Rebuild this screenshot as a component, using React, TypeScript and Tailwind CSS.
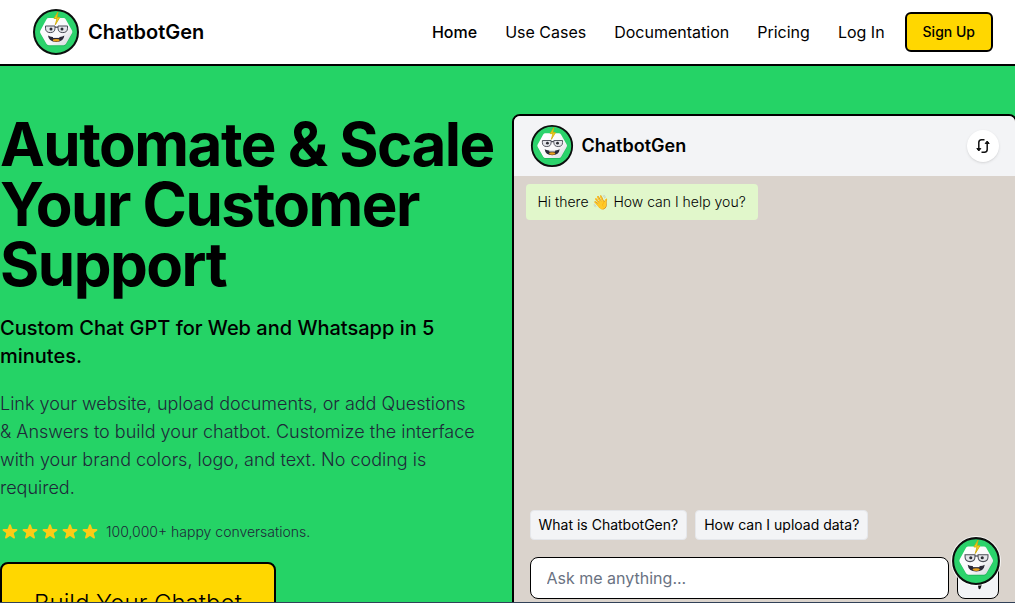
import { useState } from "react";

const navLinks = [
  { label: "Home", href: "#home", active: true },
  { label: "Use Cases", href: "#use-cases" },
  { label: "Documentation", href: "#docs" },
  { label: "Pricing", href: "#pricing" },
  { label: "Log In", href: "#login" },
];

const suggestions = ["What is ChatbotGen?", "How can I upload data?"];

function BotLogo({ className }: { className: string }) {
  return (
    <svg viewBox="0 0 48 48" className={className} aria-hidden="true">
      <defs>
        <linearGradient id="face" x1="0" y1="0" x2="1" y2="1">
          <stop offset="0" stopColor="#ffffff" />
          <stop offset="0.6" stopColor="#f8f8fa" />
          <stop offset="1" stopColor="#d0d2d9" />
        </linearGradient>
      </defs>
      <circle cx="24" cy="24" r="22" fill="#2bd36b" stroke="#0b0f0d" strokeWidth="2" />
      <path d="M17 11h14.500q1.500 0 2.300 1.400l6.200 11q.8 1.400 0 2.800l-6 10.600q-.8 1.400-2.300 1.400H17q-1.500 0-2.300-1.400l-6-10.600q-.8-1.400 0-2.800l6-11Q15.500 11 17 11z" fill="#1a9e4b" opacity="0.5" />
      <path d="M16.700 10h14.800q1.500 0 2.300 1.400l6.200 11q.8 1.400 0 2.800l-6 10.600q-.8 1.400-2.300 1.400H16.700q-1.500 0-2.300-1.400l-6-10.600q-.8-1.400 0-2.800l6-11Q15.200 10 16.700 10z" fill="url(#face)" />
      <path d="M26 4 22 10.500h3L23.300 16.800 27.800 9.400h-3z" fill="#f9d71c" stroke="#d0ab10" strokeWidth="0.900" />
      <path d="M13.500 18h9.500v2.200q0 4.400-4.700 4.400t-4.800-4.400zM26 18h9.500v2.200q0 4.400-4.700 4.400T26 20.200z" fill="#e4e5ea" stroke="#4a4c56" strokeWidth="1" />
      <path d="M23 19.200h3" stroke="#4a4c56" strokeWidth="1.200" />
      <circle cx="19" cy="20.900" r="1.500" fill="#2b2c34" />
      <circle cx="30" cy="20.900" r="1.500" fill="#2b2c34" />
      <path d="M16 27.500q2 1.200 4.500 1.400h7.400q2.500-.2 4.500-1.400-.8 6.500-8.200 6.500T16 27.500z" fill="#2a2836" />
      <path d="M21 28.600h6.400v1.300H21z" fill="#fff" />
      <ellipse cx="24.200" cy="32.200" rx="3.400" ry="1.300" fill="#e8a01c" />
    </svg>
  );
}

function Header() {
  return (
    <header className="flex shrink-0 items-center justify-between border-b-2 border-black bg-white py-2 pr-[22px] pl-8">
      <a href="#home" className="flex items-center gap-2">
        <BotLogo className="size-12" />
        <span className="text-xl font-semibold">ChatbotGen</span>
      </a>
      <nav className="flex items-center gap-5">
        <div className="flex items-center gap-7">
          {navLinks.map((link) => (
            <a key={link.label} href={link.href} className={link.active ? "font-medium" : ""}>
              {link.label}
            </a>
          ))}
        </div>
        <button type="button" className="h-10 rounded-md border-2 border-black bg-[#ffd700] px-4 text-sm font-medium">
          Sign Up
        </button>
      </nav>
    </header>
  );
}

function Hero() {
  return (
    <div className="flex flex-col items-start gap-5">
      <h1 className="text-6xl leading-none font-bold tracking-tight">Automate &amp; Scale Your Customer Support</h1>
      <h2 className="text-xl font-medium">Custom Chat GPT for Web and Whatsapp in 5 minutes.</h2>
      <p className="pr-4 text-lg leading-7 font-light text-gray-800">
        Link your website, upload documents, or add Questions &amp;&nbsp;Answers to build your chatbot. Customize the
        interface with your brand colors, logo, and text. No coding is required.
      </p>
      <div className="flex items-center gap-1.5">
        <div className="flex">
          {[1, 2, 3, 4, 5].map((n) => (
            <svg key={n} viewBox="0 0 20 20" className="size-5 fill-[#facc15]" aria-hidden="true">
              <path d="M9.049 2.927c.3-.921 1.603-.921 1.902 0l1.070 3.292a1 1 0 00.950.690h3.462c.969 0 1.371 1.240.588 1.810l-2.800 2.034a1 1 0 00-.364 1.118l1.070 3.292c.3.921-.755 1.688-1.540 1.118l-2.800-2.034a1 1 0 00-1.175 0l-2.800 2.034c-.784.570-1.838-.197-1.539-1.118l1.070-3.292a1 1 0 00-.364-1.118L2.980 8.720c-.783-.570-.380-1.810.588-1.810h3.461a1 1 0 00.951-.690l1.070-3.292z" />
            </svg>
          ))}
        </div>
        <span className="text-sm font-light text-gray-800">100,000+ happy conversations.</span>
      </div>
      <button type="button" className="rounded-lg border-2 border-black bg-[#ffd700] px-8 py-6 text-2xl font-light">
        Build Your Chatbot
      </button>
    </div>
  );
}

function ChatPanel() {
  const [message, setMessage] = useState("");

  return (
    <section className="-mr-0.5 flex flex-col overflow-hidden rounded-lg border-2 border-black bg-[#dad3cc]">
      <div className="flex h-15 shrink-0 items-center justify-between bg-gray-100 px-4">
        <div className="flex items-center gap-2">
          <BotLogo className="size-11" />
          <span className="text-lg font-semibold">ChatbotGen</span>
        </div>
        <button
          type="button"
          aria-label="Restart chat"
          className="flex size-8 items-center justify-center rounded-full bg-white shadow-sm"
        >
          <svg viewBox="0 0 16 16" className="size-4" fill="none" stroke="#111" strokeWidth="1.500" aria-hidden="true">
            <path d="M9.500 1.800H6.500Q3.800 1.800 3.800 4.500V11M6.500 14.200h3Q12.200 14.200 12.200 11.500V5" />
            <path d="M1.800 10.500h4L3.800 13zM10.200 5.500h4L12.200 3z" fill="#111" strokeWidth="1" />
          </svg>
        </button>
      </div>

      {/* messages */}
      <div className="min-h-[334px] flex-1 px-3 py-2">
        <p className="w-fit rounded bg-[#e1f7cb] px-3 py-2 text-sm font-light">Hi there 👋 How can I help you?</p>
      </div>

      <div className="flex flex-col gap-[17px] px-4 pb-4">
        <div className="flex gap-2">
          {suggestions.map((text) => (
            <button
              key={text}
              type="button"
              onClick={() => setMessage(text)}
              className="rounded border border-gray-200 bg-gray-100 px-2 py-1 text-sm"
            >
              {text}
            </button>
          ))}
        </div>
        <form className="flex gap-2" onSubmit={(e) => e.preventDefault()}>
          <input
            type="text"
            aria-label="Message"
            placeholder="Ask me anything..."
            value={message}
            onChange={(e) => setMessage(e.target.value)}
            className="h-[42px] min-w-0 flex-1 rounded-lg border border-black bg-white px-4 placeholder:text-gray-500"
          />
          <button
            type="submit"
            aria-label="Send"
            className="flex size-[42px] items-center justify-center rounded-lg border border-black bg-gray-100"
          >
            <svg viewBox="0 0 24 24" className="size-6" aria-hidden="true">
              <path d="M21 3 4 9l7 4 1.500 9.500q1 1.500 2 0z" fill="#111" />
            </svg>
          </button>
        </form>
      </div>
    </section>
  );
}

export default function App() {
  return (
    <div className="flex h-screen flex-col overflow-hidden border-b border-slate-700 bg-[#25d366] font-['Inter',sans-serif] text-black">
      <Header />
      <main className="grid grid-cols-2 items-start gap-2 pt-12">
        <Hero />
        <ChatPanel />
      </main>
      <button type="button" aria-label="Open chat" className="fixed right-3.5 bottom-[17px] rounded-full bg-white/80">
        <BotLogo className="size-[50px]" />
      </button>
    </div>
  );
}
